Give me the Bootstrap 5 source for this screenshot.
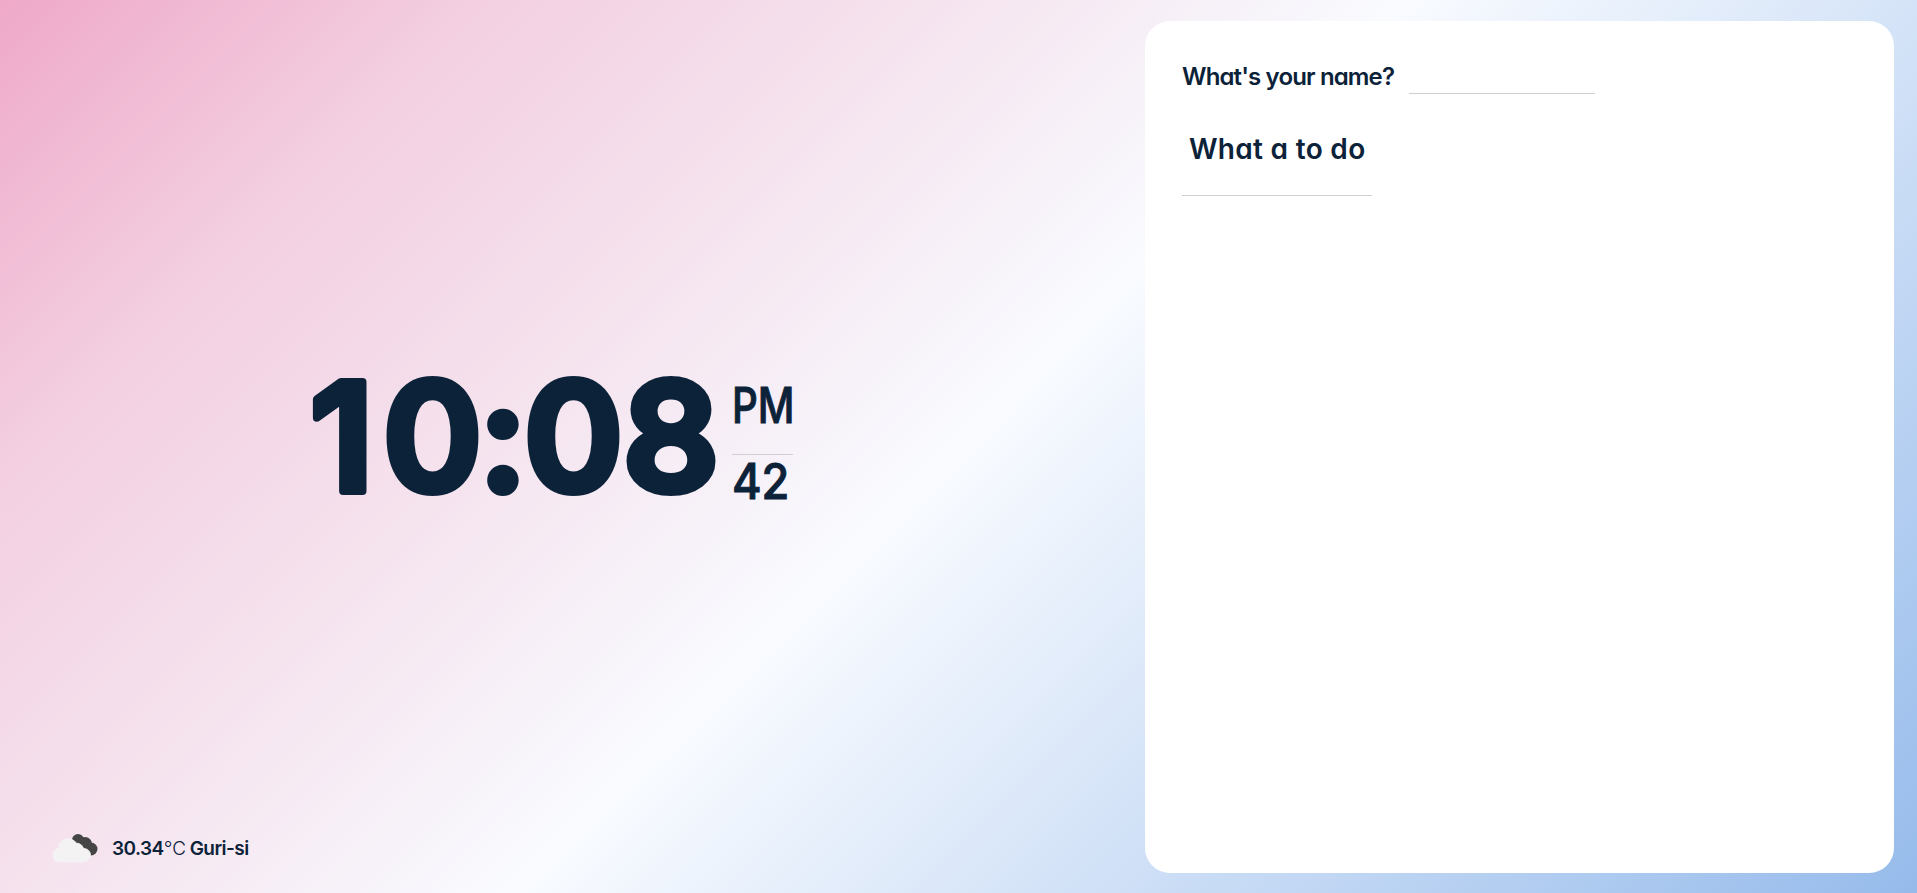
<!DOCTYPE html>
<html lang="en">
<head>
<meta charset="utf-8">
<title>Momentum</title>
<link href="https://cdn.jsdelivr.net/npm/bootstrap@5.3.0/dist/css/bootstrap.min.css" rel="stylesheet">
<style>
html, body { height: 100%; }
body {
  background: linear-gradient(135deg, #efa9c9 0%, #f3cfe1 17%, #f5e3ee 33%, #f7f2f9 44%, #f9fbff 50%, #96bbeb 100%);
  color: #0c2239;
  font-family: "Inter", "Noto Sans", sans-serif;
  font-feature-settings: "cv11" 1;
  overflow: hidden;
}
.stage { height: 893px; padding: 21px 23px 20px 0; }
.left-pane { width: 1145px; padding: 0 0 9px 53px; }
.clock-zone { padding-left: 257px; padding-top: 300px; }
.clock-svg { display: block; overflow: visible; }
.clock-svg text {
  font-family: "Inter", sans-serif; font-weight: 600; font-size: 150px;
  fill: #0c2239; stroke: #0c2239; stroke-width: 8px; stroke-linejoin: round;
}
.clock-side { width: 61px; padding-top: 60px; font-weight: 500; font-size: 49px; line-height: 1; -webkit-text-stroke: 1px #0c2239; }
.side-text { display: block; transform-origin: left center; white-space: nowrap; }
.side-pm { transform: scaleX(.82); }
.side-sec { transform: scaleX(.92); }
.clock-side hr { margin: 24px 0 2px; opacity: 1; border-color: #cfcfd4; }
.weather { font-weight: 600; font-size: 19px; gap: 14px; letter-spacing: -.55px; }
.weather .unit { font-weight: 300; }
.todo-panel { width: 749px; background: #fff; border-radius: 25px; padding: 39px 37px; font-weight: 600; }
.name-label { font-size: 24px; line-height: 34px; letter-spacing: -.85px; }
.line-input { border: 0; border-bottom: 1px solid #cfcfcf; background: transparent; outline: 0; width: 186px; height: 28px; margin-left: 15px; }
.todo-title { font-size: 28px; font-weight: 600; line-height: 38px; letter-spacing: .3px; padding-left: 7px; margin: 36px 0 0; }
.todo-input { width: 190px; display: block; margin: 0; }
</style>
</head>
<body>
<div class="stage d-flex justify-content-between">
  <div class="left-pane d-flex flex-column justify-content-between">
    <div class="clock-zone d-flex align-items-start">
      <svg class="clock-svg" width="422" height="181" viewBox="0 0 422 181" role="img" aria-label="10:08">
        <text x="0 73 169 214 313" y="170">10:08</text>
      </svg>
      <div class="clock-side">
        <span class="side-text side-pm">PM</span>
        <hr>
        <span class="side-text side-sec">42</span>
      </div>
    </div>
    <div class="weather d-flex align-items-center">
      <svg width="45" height="30" viewBox="0 0 45 30" aria-hidden="true">
        <g fill="#454545">
          <circle cx="25" cy="6" r="6"/><circle cx="32" cy="10" r="7"/><circle cx="38" cy="15" r="6.5"/>
        </g>
        <g fill="#f3f3f3" stroke="#f7f0f6" stroke-width=".8">
          <circle cx="15" cy="14" r="9.5"/><circle cx="6" cy="21" r="6.5"/><circle cx="31" cy="21" r="6.5"/><circle cx="23" cy="17" r="8"/>
          <rect x="1" y="18" width="34" height="10" rx="4"/>
        </g>
      </svg>
      <div>30.34<span class="unit">℃</span> Guri-si</div>
    </div>
  </div>
  <div class="todo-panel">
    <div class="d-flex align-items-end">
      <label class="name-label" for="nm">What's your name?</label>
      <input id="nm" class="line-input" type="text">
    </div>
    <h2 class="todo-title">What a to do</h2>
    <input class="line-input todo-input" type="text" aria-label="To do">
  </div>
</div>
<script src="https://cdn.jsdelivr.net/npm/bootstrap@5.3.0/dist/js/bootstrap.bundle.min.js"></script>
</body>
</html>
